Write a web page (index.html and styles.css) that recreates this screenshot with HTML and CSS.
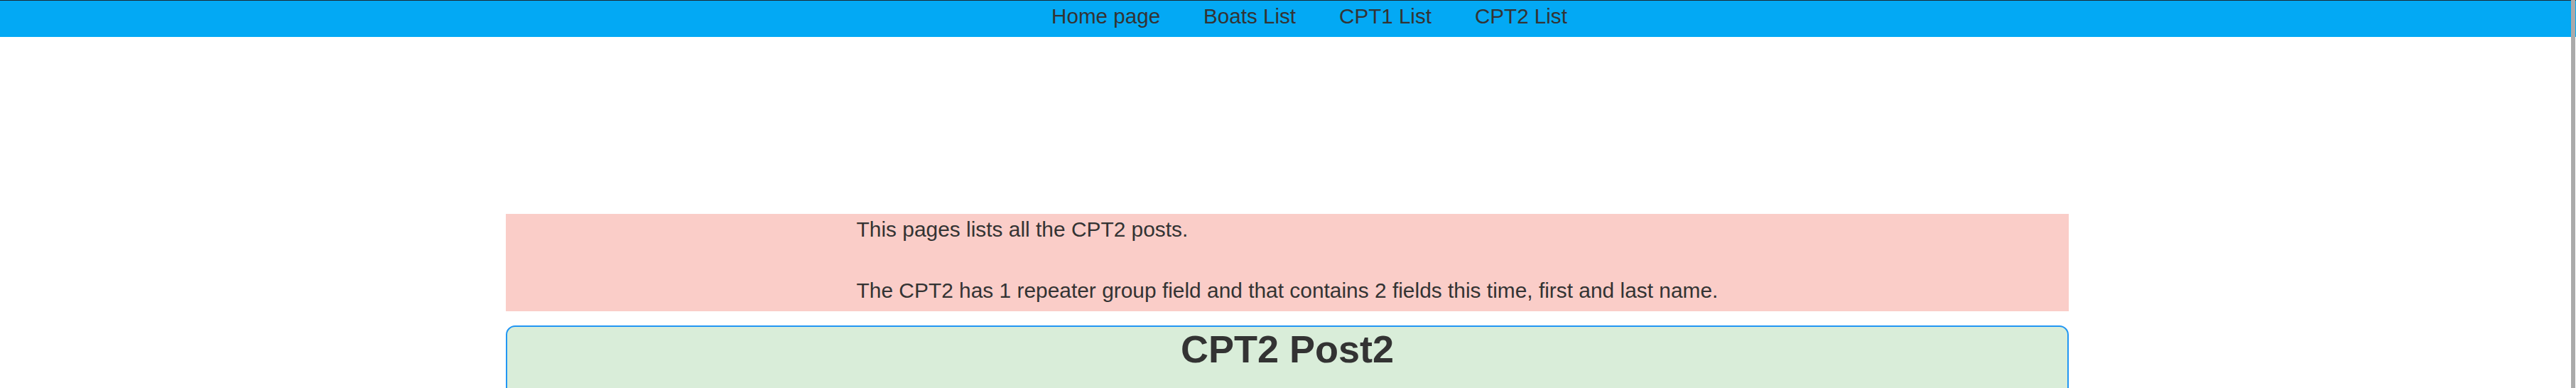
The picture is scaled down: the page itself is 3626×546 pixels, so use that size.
FILE: index.html
```html
<!DOCTYPE html>
<html lang="en">
<head>
<meta charset="utf-8">
<title>CPT2 List</title>
<link rel="stylesheet" href="styles.css">
</head>
<body>
<nav class="topnav">
  <a class="navlink" href="#">Home page</a>
  <a class="navlink" href="#">Boats List</a>
  <a class="navlink" href="#">CPT1 List</a>
  <a class="navlink" href="#">CPT2 List</a>
</nav>
<main class="page">
  <section class="intro">
    <div class="intro-text">This pages lists all the CPT2 posts.<br><br>The CPT2 has 1 repeater group field and that contains 2 fields this time, first and last name.</div>
  </section>
  <article class="post">
    <h2 class="post-title">CPT2 Post2</h2>
  </article>
</main>
<div class="scrollbar"></div>
</body>
</html>
```
FILE: styles.css
```css
html {
  overflow: hidden;
}
body {
  margin: 0;
  font-family: "Liberation Sans", Arial, sans-serif;
  color: #333;
  background: #fff;
}
.topnav {
  height: 52px;
  box-sizing: border-box;
  border-top: 1px solid #1b2a33;
  background: #03a9f4;
  display: flex;
  justify-content: center;
  gap: 61px;
  padding-left: 60px;
  padding-top: 5px;
}
.navlink {
  font-size: 29.6px;
  line-height: 34px;
  color: #333;
  text-decoration: none;
}
.page {
  width: 2200px;
  margin: 249px auto 0;
  padding-right: 2px;
}
.intro {
  background: #facdc8;
  padding: 0 0 8px;
  display: flex;
  justify-content: center;
}
.intro-text {
  font-size: 29.9px;
  line-height: 43px;
  color: #333;
}
.post {
  margin-top: 20px;
  background: #d9edd9;
  border: 2px solid #2196f3;
  border-radius: 13px;
  height: 300px;
}
.post-title {
  margin: 0;
  text-align: center;
  font-size: 54px;
  line-height: 62px;
  color: #333;
}
.scrollbar {
  position: fixed;
  top: 0;
  right: 1px;
  width: 6px;
  height: 100%;
  background: #aaa;
}
```
